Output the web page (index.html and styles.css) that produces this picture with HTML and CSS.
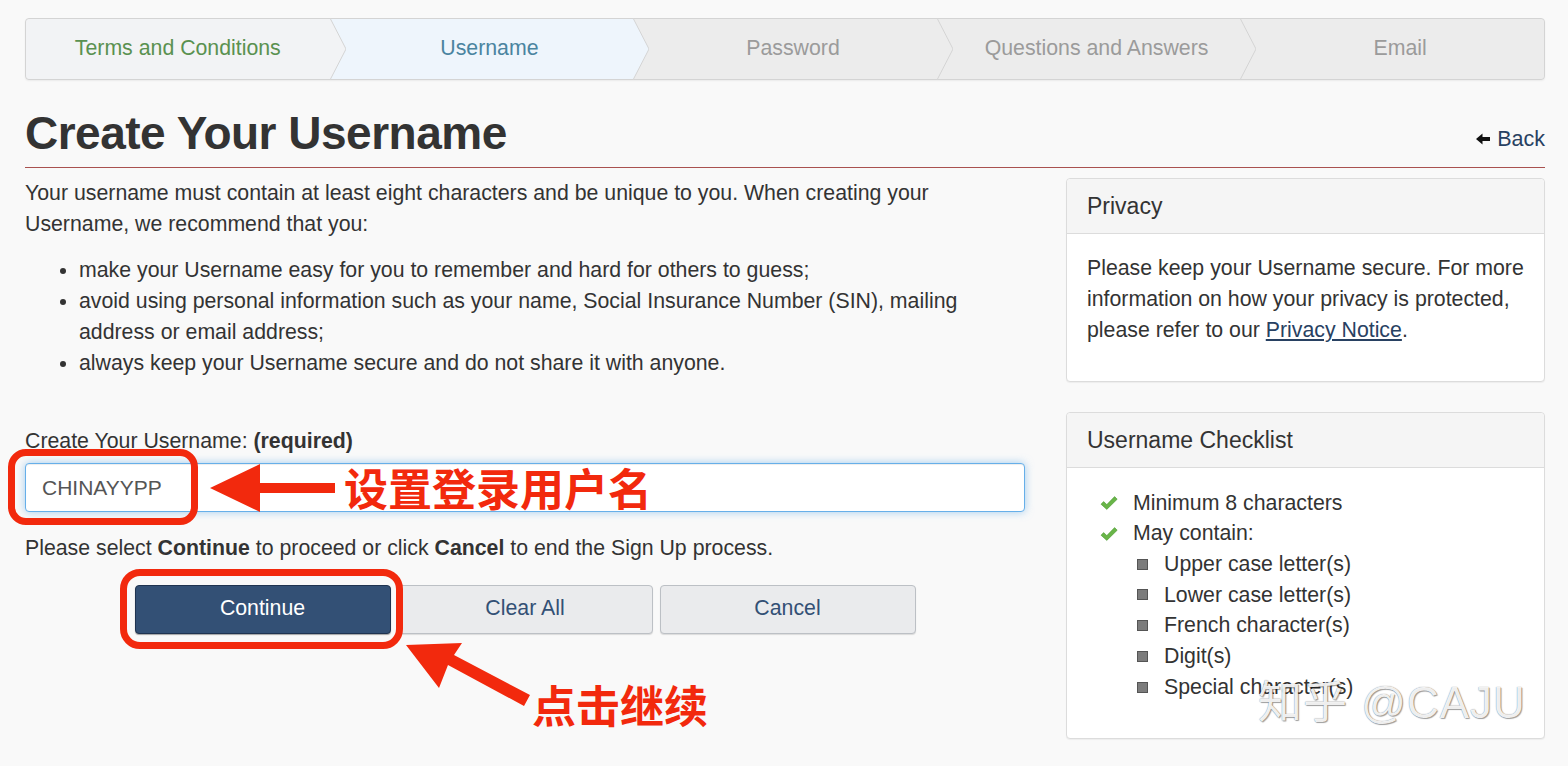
FILE: index.html
```html
<!DOCTYPE html>
<html lang="en">
<head>
<meta charset="utf-8">
<title>Create Your Username</title>
<link rel="stylesheet" href="styles.css">
</head>
<body>
<div class="page">
  <nav class="steps">
    <div class="step step-done">Terms and Conditions<svg class="chev" viewBox="0 0 16 62" preserveAspectRatio="none"><polygon points="0,0 16,31 0,62" fill="#f2f3f5"/><polyline points="0,0 16,31 0,62" fill="none" stroke="#d4d4d4" stroke-width="1"/></svg></div>
    <div class="step step-current">Username<svg class="chev" viewBox="0 0 16 62" preserveAspectRatio="none"><polygon points="0,0 16,31 0,62" fill="#eef5fc"/><polyline points="0,0 16,31 0,62" fill="none" stroke="#d4d4d4" stroke-width="1"/></svg></div>
    <div class="step">Password<svg class="chev" viewBox="0 0 16 62" preserveAspectRatio="none"><polygon points="0,0 16,31 0,62" fill="#ececec"/><polyline points="0,0 16,31 0,62" fill="none" stroke="#d4d4d4" stroke-width="1"/></svg></div>
    <div class="step">Questions and Answers<svg class="chev" viewBox="0 0 16 62" preserveAspectRatio="none"><polygon points="0,0 16,31 0,62" fill="#ececec"/><polyline points="0,0 16,31 0,62" fill="none" stroke="#d4d4d4" stroke-width="1"/></svg></div>
    <div class="step">Email</div>
  </nav>

  <header class="title-row">
    <h1>Create Your Username</h1>
    <a class="back" href="#"><svg class="back-arrow" viewBox="0 0 14 12"><path d="M0 6 L6.5 0.5 L6.5 4 L14 4 L14 8 L6.5 8 L6.5 11.5 Z" fill="#111"/></svg>Back</a>
  </header>

  <div class="layout">
    <main class="main">
      <p class="intro">Your username must contain at least eight characters and be unique to you. When creating your Username, we recommend that you:</p>
      <ul class="recs">
        <li>make your Username easy for you to remember and hard for others to guess;</li>
        <li>avoid using personal information such as your name, Social Insurance Number (SIN), mailing address or email address;</li>
        <li>always keep your Username secure and do not share it with anyone.</li>
      </ul>
      <form class="form">
        <label class="label" for="uname">Create Your Username: <strong>(required)</strong></label>
        <input class="input" id="uname" type="text" value="CHINAYYPP">
        <p class="hint">Please select <strong>Continue</strong> to proceed or click <strong>Cancel</strong> to end the Sign Up process.</p>
        <div class="buttons">
          <button type="button" class="btn btn-primary">Continue</button>
          <button type="button" class="btn">Clear All</button>
          <button type="button" class="btn">Cancel</button>
        </div>
      </form>
    </main>

    <aside class="side">
      <section class="panel panel-privacy">
        <h2 class="panel-head">Privacy</h2>
        <div class="panel-body">
          <p>Please keep your Username secure. For more information on how your privacy is protected, please refer to our <a href="#">Privacy Notice</a>.</p>
        </div>
      </section>
      <section class="panel panel-check">
        <h2 class="panel-head">Username Checklist</h2>
        <div class="panel-body">
          <ul class="checks">
            <li><svg class="tick" viewBox="0 0 18 16"><path d="M1 9.2 L3.6 6.6 L6.8 9.6 L14.6 1.6 L17.2 4.2 L6.8 14.4 Z" fill="#69b548" stroke="#4e9a36" stroke-width="0.6"/></svg>Minimum 8 characters</li>
            <li><svg class="tick" viewBox="0 0 18 16"><path d="M1 9.2 L3.6 6.6 L6.8 9.6 L14.6 1.6 L17.2 4.2 L6.8 14.4 Z" fill="#69b548" stroke="#4e9a36" stroke-width="0.6"/></svg>May contain:</li>
          </ul>
          <ul class="subs">
            <li>Upper case letter(s)</li>
            <li>Lower case letter(s)</li>
            <li>French character(s)</li>
            <li>Digit(s)</li>
            <li>Special character(s)</li>
          </ul>
        </div>
      </section>
    </aside>
  </div>
</div>

<div class="note-box note-input"></div>
<svg class="note-arrow arrow-1" viewBox="0 0 130 52"><polygon points="0,26 50,2 50,21 125,21 125,31 50,31 50,50" fill="#f2290d"/></svg>
<div class="note-text note-text-1">设置登录用户名</div>
<div class="note-box note-btn"></div>
<svg class="note-arrow arrow-2" viewBox="0 0 130 70"><polygon points="0,2 56,0 48,12 124,52 118,63 42,22 33,45" fill="#f2290d"/></svg>
<div class="note-text note-text-2">点击继续</div>
<div class="watermark">知乎 @CAJU</div>
</body>
</html>
```

FILE: styles.css
```css
* { box-sizing: border-box; }

html, body {
  margin: 0;
  padding: 0;
  background: #f9f9f9;
}

body {
  font-family: "Liberation Sans", Arial, sans-serif;
  color: #333;
  font-size: 21.3px;
  line-height: 31px;
  width: 1568px;
  height: 766px;
  overflow: hidden;
  position: relative;
}

.page {
  padding: 18px 23px 0 25px;
}

/* steps */
.steps {
  display: flex;
  height: 62px;
  border: 1px solid #d4d4d4;
  border-radius: 4px;
  background: #ececec;
  box-shadow: 0 1px 2px rgba(0,0,0,0.06);
}

.step {
  flex: 0 0 20%;
  position: relative;
  display: flex;
  align-items: center;
  justify-content: center;
  color: #9b9b9b;
  background: #ececec;
  font-size: 21.3px;
  padding: 0 0 2px 16px;
}

.step-done {
  background: #f2f3f5;
  color: #5a9150;
  border-radius: 4px 0 0 4px;
  padding-left: 0;
}

.step-current {
  background: #eef5fc;
  color: #4a84a0;
}

.step:last-child {
  border-radius: 0 4px 4px 0;
}

.chev {
  position: absolute;
  top: -1px;
  right: -16px;
  width: 16px;
  height: 62px;
  z-index: 2;
}

/* title */
.title-row {
  display: flex;
  justify-content: space-between;
  align-items: flex-end;
  padding-top: 25px;
  padding-bottom: 6px;
  border-bottom: 1px solid #a9514f;
}

h1 {
  margin: 0;
  font-size: 46px;
  line-height: 56px;
  font-weight: bold;
  letter-spacing: -0.5px;
  color: #333;
}

.back {
  display: flex;
  align-items: center;
  gap: 7px;
  color: #284162;
  text-decoration: none;
  font-size: 21.5px;
  margin-bottom: 11px;
  line-height: 22px;
}

.back-arrow {
  width: 14px;
  height: 12px;
}

/* layout */
.layout {
  display: grid;
  grid-template-columns: 1000px 1fr;
  column-gap: 41px;
  padding-top: 10px;
}

.intro {
  margin: 0 0 15px;
}

.recs {
  margin: 0;
  padding-left: 54px;
}

.form {
  display: flex;
  flex-direction: column;
  margin-top: 47px;
}

.label {
  display: block;
  margin-bottom: 6px;
}

.input {
  width: 1000px;
  height: 49px;
  border: 1px solid #66afe9;
  border-radius: 4px;
  box-shadow: inset 0 1px 1px rgba(0,0,0,0.075), 0 0 8px rgba(102,175,233,0.6);
  padding: 0 16px;
  font-family: "Liberation Sans", Arial, sans-serif;
  font-size: 21px;
  color: #555;
  background: #fff;
  outline: none;
}

.hint {
  margin: 21px 0 0;
}

.buttons {
  display: flex;
  justify-content: center;
  gap: 6.5px;
  margin-top: 21px;
}

.btn {
  width: 256px;
  height: 49px;
  border: 1px solid #bcc0c5;
  border-radius: 4px;
  background: #eaebed;
  color: #335075;
  font-family: "Liberation Sans", Arial, sans-serif;
  font-size: 21.3px;
  padding: 0 0 2px;
  box-shadow: 0 1px 1px rgba(0,0,0,0.12);
}

.btn-primary {
  background: #335075;
  border-color: #1f3350;
  color: #fff;
  box-shadow: 0 1px 1px rgba(0,0,0,0.35);
}

/* side */
.side {
  display: flex;
  flex-direction: column;
  gap: 30px;
  padding-top: 0;
}

.panel {
  background: #fff;
  border: 1px solid #dcdcdc;
  border-radius: 4px;
  box-shadow: 0 1px 1px rgba(0,0,0,0.05);
}

.panel-head {
  margin: 0;
  height: 55px;
  padding: 0 20px;
  display: flex;
  align-items: center;
  background: #f5f5f5;
  border-bottom: 1px solid #dcdcdc;
  border-radius: 4px 4px 0 0;
  font-size: 23px;
  font-weight: normal;
  color: #333;
}

.panel-privacy .panel-body {
  padding: 19px 20px 35px;
}

.panel-body p {
  margin: 0;
}

.panel-body a {
  color: #284162;
  text-decoration: underline;
}

.panel-check .panel-body {
  padding: 19.5px 20px 35.5px;
  line-height: 30.7px;
}

.checks, .subs {
  list-style: none;
  margin: 0;
  padding: 0;
}

.checks li {
  display: flex;
  align-items: center;
  padding-left: 13px;
}

.tick {
  width: 18px;
  height: 16px;
  margin-right: 15px;
}

.subs {
  padding-left: 50px;
}

.subs li {
  display: flex;
  align-items: center;
}

.subs li::before {
  content: "";
  width: 9px;
  height: 9px;
  background: #7c7c7c;
  border: 1px solid #555;
  margin-right: 16px;
  flex: none;
}

/* annotations */
.note-box {
  position: absolute;
  border: 7px solid #f2290d;
  border-radius: 18px;
}

.note-input {
  left: 8px;
  top: 449px;
  width: 190px;
  height: 76px;
}

.note-btn {
  left: 120px;
  top: 569px;
  width: 283px;
  height: 80px;
  border-radius: 20px;
}

.note-arrow {
  position: absolute;
}

.arrow-1 {
  left: 210px;
  top: 462px;
  width: 130px;
  height: 52px;
}

.arrow-2 {
  left: 406px;
  top: 643px;
  width: 130px;
  height: 70px;
}

.note-text {
  position: absolute;
  font-family: "Noto Sans CJK SC", sans-serif;
  font-weight: bold;
  font-size: 44px;
  line-height: 48px;
  color: #f2290d;
  letter-spacing: 0;
}

.note-text-1 {
  left: 344px;
  top: 463px;
}

.note-text-2 {
  left: 532px;
  top: 680px;
}

.watermark {
  position: absolute;
  left: 1258px;
  top: 678px;
  font-family: "Liberation Sans", "Noto Sans CJK SC", sans-serif;
  font-size: 44px;
  line-height: 50px;
  color: rgba(255,255,255,0.92);
  text-shadow: 0 0 1px rgba(0,0,0,0.55), 1px 1px 1px rgba(0,0,0,0.35);
  letter-spacing: 1px;
}
```
